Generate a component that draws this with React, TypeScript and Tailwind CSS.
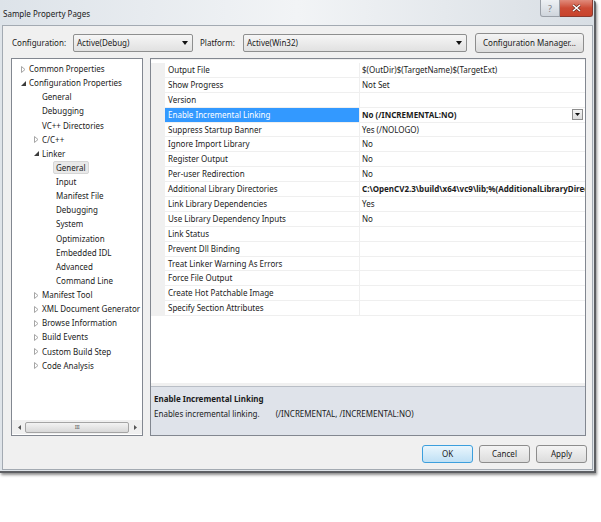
import React from 'react';

type TreeItem = { label: string; level: 0 | 1 | 2; arrow?: 'open' | 'closed'; selected?: boolean };

const tree: TreeItem[] = [
  { label: 'Common Properties', level: 0, arrow: 'closed' },
  { label: 'Configuration Properties', level: 0, arrow: 'open' },
  { label: 'General', level: 1 },
  { label: 'Debugging', level: 1 },
  { label: 'VC++ Directories', level: 1 },
  { label: 'C/C++', level: 1, arrow: 'closed' },
  { label: 'Linker', level: 1, arrow: 'open' },
  { label: 'General', level: 2, selected: true },
  { label: 'Input', level: 2 },
  { label: 'Manifest File', level: 2 },
  { label: 'Debugging', level: 2 },
  { label: 'System', level: 2 },
  { label: 'Optimization', level: 2 },
  { label: 'Embedded IDL', level: 2 },
  { label: 'Advanced', level: 2 },
  { label: 'Command Line', level: 2 },
  { label: 'Manifest Tool', level: 1, arrow: 'closed' },
  { label: 'XML Document Generator', level: 1, arrow: 'closed' },
  { label: 'Browse Information', level: 1, arrow: 'closed' },
  { label: 'Build Events', level: 1, arrow: 'closed' },
  { label: 'Custom Build Step', level: 1, arrow: 'closed' },
  { label: 'Code Analysis', level: 1, arrow: 'closed' },
];

type Prop = { name: string; value: string; bold?: boolean; selected?: boolean };

const props: Prop[] = [
  { name: 'Output File', value: '$(OutDir)$(TargetName)$(TargetExt)' },
  { name: 'Show Progress', value: 'Not Set' },
  { name: 'Version', value: '' },
  { name: 'Enable Incremental Linking', value: 'No (/INCREMENTAL:NO)', bold: true, selected: true },
  { name: 'Suppress Startup Banner', value: 'Yes (/NOLOGO)' },
  { name: 'Ignore Import Library', value: 'No' },
  { name: 'Register Output', value: 'No' },
  { name: 'Per-user Redirection', value: 'No' },
  { name: 'Additional Library Directories', value: 'C:\\OpenCV2.3\\build\\x64\\vc9\\lib;%(AdditionalLibraryDirectories)', bold: true },
  { name: 'Link Library Dependencies', value: 'Yes' },
  { name: 'Use Library Dependency Inputs', value: 'No' },
  { name: 'Link Status', value: '' },
  { name: 'Prevent Dll Binding', value: '' },
  { name: 'Treat Linker Warning As Errors', value: '' },
  { name: 'Force File Output', value: '' },
  { name: 'Create Hot Patchable Image', value: '' },
  { name: 'Specify Section Attributes', value: '' },
];

const levelPad = { 0: 'pl-[9px]', 1: 'pl-[22px]', 2: 'pl-[44px]' };

const Arrow = ({ kind }: { kind?: 'open' | 'closed' }) => {
  if (!kind) return null;
  return (
    <span className="w-[8px] h-[8px] flex items-center">
      {kind === 'closed' ? (
        <svg width="5" height="7" viewBox="0 0 5 7">
          <path d="M0.5 0.5 L4 3.5 L0.5 6.5 Z" fill="none" stroke="#a6a6a6" strokeWidth="1" />
        </svg>
      ) : (
        <svg width="5" height="5" viewBox="0 0 5 5">
          <path d="M5 0 L5 5 L0 5 Z" fill="#3c3c3c" />
        </svg>
      )}
    </span>
  );
};

const DownTri = () => (
  <svg width="6" height="4" viewBox="0 0 6 4">
    <path d="M0 0 H6 L3 4 Z" fill="#111" />
  </svg>
);

const Combo = ({ text, w }: { text: string; w: string }) => (
  <div className={`${w} h-[18px] flex items-center justify-between pl-[3px] pr-[4px] border border-[#8e8f8f] rounded-[2px] bg-linear-to-b from-[#f6f6f6] to-[#e1e1e1]`}>
    <span>{text}</span>
    <DownTri />
  </div>
);

const Button = ({ text, primary }: { text: string; primary?: boolean }) => (
  <div
    className={`w-[51px] h-[18px] flex items-center justify-center rounded-[3px] border ${
      primary
        ? 'border-[#3c9fdd] bg-linear-to-b from-[#eaf6fd] to-[#bfe0f5]'
        : 'border-[#8d8d8d] bg-linear-to-b from-[#f4f4f4] to-[#dcdcdc]'
    }`}
  >
    {text}
  </div>
);

export default function App() {
  return (
    <div className="w-[601px] h-[522px] bg-white text-[8px] leading-none text-[#1b1b1b] font-['Noto_Sans',sans-serif]">
      <div className="w-[596px] h-[473px] flex flex-col bg-[#dfe4e9] border-r-[2px] border-b-[2px] border-[#5d5f63] shadow-[1px_2px_3px_rgba(0,0,0,0.45)] rounded-tr-[4px]">
        {/* title bar */}
        <div className="h-[25px] flex justify-between bg-linear-to-r from-[#dde3e9] via-[#f2f4f6] to-[#d8dee4]">
          <div className="pl-[3px] pt-[10px] text-[#202020]">Sample Property Pages</div>
          <div className="flex self-start mr-[1px]">
            <div className="w-[20px] h-[17px] flex items-center justify-center border border-[#9aa0a8] border-t-0 rounded-bl-[3px] bg-linear-to-b from-[#eef1f4] to-[#cfd5dc] text-[#7c8088] text-[9px]">
              ?
            </div>
            <div className="w-[33px] h-[17px] flex items-center justify-center border border-[#8b3a2f] border-t-0 border-l-0 rounded-br-[3px] bg-linear-to-b from-[#e08a7b] via-[#cc4b35] to-[#c8432c]">
              <svg width="9" height="8" viewBox="0 0 9 8">
                <path d="M1 1 L8 7 M8 1 L1 7" stroke="#5a2016" strokeWidth="2.6" />
                <path d="M1 1 L8 7 M8 1 L1 7" stroke="#ffffff" strokeWidth="1.6" />
              </svg>
            </div>
          </div>
        </div>

        {/* client */}
        <div className="flex-1 ml-[2px] mr-[1px] mb-[1px] flex flex-col bg-[#f0f0f0] border border-[#a3aab2] pl-[8px] pr-[4px]">
          <div className="mt-[7px] h-[20px] flex items-center">
            <span className="w-[62px] pl-[1px]">Configuration:</span>
            <Combo text="Active(Debug)" w="w-[120px]" />
            <span className="ml-[7px] w-[43px]">Platform:</span>
            <Combo text="Active(Win32)" w="w-[224px]" />
            <div className="ml-[8px] w-[109px] h-[20px] flex items-center justify-center rounded-[3px] border border-[#8d8d8d] bg-linear-to-b from-[#f4f4f4] to-[#dcdcdc]">
              Configuration Manager...
            </div>
          </div>

          <div className="mt-[5px] h-[378px] flex gap-[7px]">
            {/* tree */}
            <div className="w-[132px] flex flex-col bg-white border border-[#828790]">
              <div className="flex-1 pt-[3px]">
                {tree.map((t, i) => (
                  <div key={i} className={`h-[14.14px] flex items-center ${levelPad[t.level]}`}>
                    {t.level < 2 && (t.arrow ? <Arrow kind={t.arrow} /> : <span className="w-[8px]" />)}
                    <span
                      className={
                        t.selected
                          ? 'h-[13px] flex items-center px-[2px] -ml-[3px] bg-[#e9e9e9] border border-[#d6d6d6] rounded-[2px]'
                          : ''
                      }
                    >
                      {t.label}
                    </span>
                  </div>
                ))}
              </div>
              <div className="h-[14px] mb-[1px] flex items-center bg-[#f0f0f0] px-[2px]">
                <span className="w-[10px] flex justify-center">
                  <svg width="3" height="5" viewBox="0 0 3 5"><path d="M3 0 L0 2.5 L3 5 Z" fill="#555" /></svg>
                </span>
                <div className="flex-1 h-[11px] mx-[1px] flex items-center justify-center rounded-[2px] border border-[#a4a4a4] bg-linear-to-b from-[#f3f3f3] to-[#d8d8d8] text-[6px] text-[#666] tracking-[-0.5px]">
                  III
                </div>
                <span className="w-[10px] flex justify-center">
                  <svg width="3" height="5" viewBox="0 0 3 5"><path d="M0 0 L3 2.5 L0 5 Z" fill="#555" /></svg>
                </span>
              </div>
            </div>

            {/* property grid */}
            <div className="w-[436px] flex flex-col border border-[#828790] bg-[#f0f0f0]">
              <div className="flex-1 flex flex-col bg-white pt-[3px] border-t border-[#f0f0f0]">
                {props.map((p, i) => (
                  <div key={i} className="h-[14.9px] flex">
                    <div className="w-[14px] bg-[#f0f0f0]" />
                    <div
                      className={`w-[195px] flex items-center pl-[3px] border-r border-b border-[#efefef] ${
                        p.selected ? 'bg-[#3399ff] text-white' : ''
                      }`}
                    >
                      {p.name}
                    </div>
                    <div className="flex-1 min-w-0 flex items-center justify-between pl-[2px] border-b border-[#efefef] overflow-hidden whitespace-nowrap">
                      <span className={p.bold ? 'font-bold' : ''}>{p.value}</span>
                      {p.selected && (
                        <div className="w-[11px] h-[11px] mr-[2px] shrink-0 flex items-center justify-center border border-[#8d8d8d] bg-linear-to-b from-[#f4f4f4] to-[#dcdcdc]">
                          <svg width="5" height="3" viewBox="0 0 5 3"><path d="M0 0 H5 L2.5 3 Z" fill="#111" /></svg>
                        </div>
                      )}
                    </div>
                  </div>
                ))}
              </div>
              <div className="h-[3px]" />
              <div className="h-[49px] bg-[#dfe3ea] border-t border-[#b9bec6] pl-[3px] pt-[8px]">
                <div className="font-bold">Enable Incremental Linking</div>
                <div className="mt-[7px] whitespace-pre">
                  Enables incremental linking.<span className="ml-[16px]">(/INCREMENTAL, /INCREMENTAL:NO)</span>
                </div>
              </div>
            </div>
          </div>

          <div className="mt-[9px] flex justify-end gap-[6px] pr-[1px]">
            <Button text="OK" primary />
            <Button text="Cancel" />
            <Button text="Apply" />
          </div>
        </div>
      </div>
    </div>
  );
}
